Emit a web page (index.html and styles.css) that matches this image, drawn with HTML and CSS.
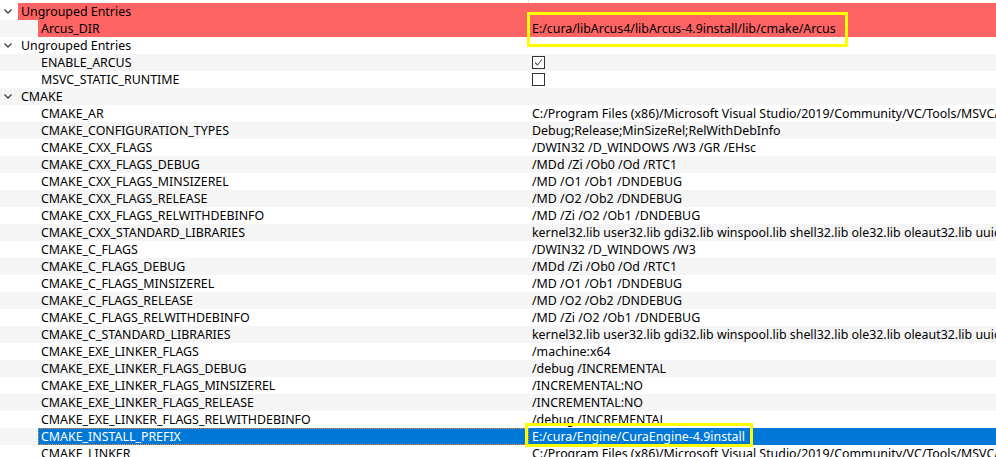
FILE: index.html
```html
<!DOCTYPE html>
<html>
<head>
<meta charset="utf-8">
<link rel="stylesheet" href="styles.css">
</head>
<body>
<div class="tree">
  <div class="topstrip"><div class="topname"></div><div class="topvalue"></div></div>

  <div class="row group">
    <div class="toggle"><svg width="8" height="5" viewBox="0 0 8 5"><polyline points="0.5,0.5 4,4 7.5,0.5" fill="none" stroke="#404040" stroke-width="1.3"/></svg></div>
    <div class="cells new"><div class="name">Ungrouped Entries</div><div class="value"></div></div>
  </div>
  <div class="row item alt">
    <div class="toggle"></div><div class="indent"></div>
    <div class="cells new"><div class="name">Arcus_DIR</div><div class="value">E:/cura/libArcus4/libArcus-4.9install/lib/cmake/Arcus</div></div>
  </div>

  <div class="row group">
    <div class="toggle"><svg width="8" height="5" viewBox="0 0 8 5"><polyline points="0.5,0.5 4,4 7.5,0.5" fill="none" stroke="#404040" stroke-width="1.3"/></svg></div>
    <div class="cells"><div class="name">Ungrouped Entries</div><div class="value"></div></div>
  </div>
  <div class="row item alt">
    <div class="toggle"></div><div class="indent"></div>
    <div class="cells"><div class="name">ENABLE_ARCUS</div><div class="value"><span class="check on"><svg width="11" height="11" viewBox="0 0 11 11"><polyline points="2,5.5 4.5,8 9,2.5" fill="none" stroke="#555" stroke-width="1.1"/></svg></span></div></div>
  </div>
  <div class="row item">
    <div class="toggle"></div><div class="indent"></div>
    <div class="cells"><div class="name">MSVC_STATIC_RUNTIME</div><div class="value"><span class="check"></span></div></div>
  </div>

  <div class="row group alt">
    <div class="toggle"><svg width="8" height="5" viewBox="0 0 8 5"><polyline points="0.5,0.5 4,4 7.5,0.5" fill="none" stroke="#404040" stroke-width="1.3"/></svg></div>
    <div class="cells"><div class="name">CMAKE</div><div class="value"></div></div>
  </div>
  <div class="row item"><div class="toggle"></div><div class="indent"></div><div class="cells"><div class="name">CMAKE_AR</div><div class="value">C:/Program Files (x86)/Microsoft Visual Studio/2019/Community/VC/Tools/MSVC/14.28.29333/bin/Hostx64/x64/lib.exe</div></div></div>
  <div class="row item alt"><div class="toggle"></div><div class="indent"></div><div class="cells"><div class="name">CMAKE_CONFIGURATION_TYPES</div><div class="value">Debug;Release;MinSizeRel;RelWithDebInfo</div></div></div>
  <div class="row item"><div class="toggle"></div><div class="indent"></div><div class="cells"><div class="name">CMAKE_CXX_FLAGS</div><div class="value">/DWIN32 /D_WINDOWS /W3 /GR /EHsc</div></div></div>
  <div class="row item alt"><div class="toggle"></div><div class="indent"></div><div class="cells"><div class="name">CMAKE_CXX_FLAGS_DEBUG</div><div class="value">/MDd /Zi /Ob0 /Od /RTC1</div></div></div>
  <div class="row item"><div class="toggle"></div><div class="indent"></div><div class="cells"><div class="name">CMAKE_CXX_FLAGS_MINSIZEREL</div><div class="value">/MD /O1 /Ob1 /DNDEBUG</div></div></div>
  <div class="row item alt"><div class="toggle"></div><div class="indent"></div><div class="cells"><div class="name">CMAKE_CXX_FLAGS_RELEASE</div><div class="value">/MD /O2 /Ob2 /DNDEBUG</div></div></div>
  <div class="row item"><div class="toggle"></div><div class="indent"></div><div class="cells"><div class="name">CMAKE_CXX_FLAGS_RELWITHDEBINFO</div><div class="value">/MD /Zi /O2 /Ob1 /DNDEBUG</div></div></div>
  <div class="row item alt"><div class="toggle"></div><div class="indent"></div><div class="cells"><div class="name">CMAKE_CXX_STANDARD_LIBRARIES</div><div class="value">kernel32.lib user32.lib gdi32.lib winspool.lib shell32.lib ole32.lib oleaut32.lib uuid.lib comdlg32.lib advapi32.lib</div></div></div>
  <div class="row item"><div class="toggle"></div><div class="indent"></div><div class="cells"><div class="name">CMAKE_C_FLAGS</div><div class="value">/DWIN32 /D_WINDOWS /W3</div></div></div>
  <div class="row item alt"><div class="toggle"></div><div class="indent"></div><div class="cells"><div class="name">CMAKE_C_FLAGS_DEBUG</div><div class="value">/MDd /Zi /Ob0 /Od /RTC1</div></div></div>
  <div class="row item"><div class="toggle"></div><div class="indent"></div><div class="cells"><div class="name">CMAKE_C_FLAGS_MINSIZEREL</div><div class="value">/MD /O1 /Ob1 /DNDEBUG</div></div></div>
  <div class="row item alt"><div class="toggle"></div><div class="indent"></div><div class="cells"><div class="name">CMAKE_C_FLAGS_RELEASE</div><div class="value">/MD /O2 /Ob2 /DNDEBUG</div></div></div>
  <div class="row item"><div class="toggle"></div><div class="indent"></div><div class="cells"><div class="name">CMAKE_C_FLAGS_RELWITHDEBINFO</div><div class="value">/MD /Zi /O2 /Ob1 /DNDEBUG</div></div></div>
  <div class="row item alt"><div class="toggle"></div><div class="indent"></div><div class="cells"><div class="name">CMAKE_C_STANDARD_LIBRARIES</div><div class="value">kernel32.lib user32.lib gdi32.lib winspool.lib shell32.lib ole32.lib oleaut32.lib uuid.lib comdlg32.lib advapi32.lib</div></div></div>
  <div class="row item"><div class="toggle"></div><div class="indent"></div><div class="cells"><div class="name">CMAKE_EXE_LINKER_FLAGS</div><div class="value">/machine:x64</div></div></div>
  <div class="row item alt"><div class="toggle"></div><div class="indent"></div><div class="cells"><div class="name">CMAKE_EXE_LINKER_FLAGS_DEBUG</div><div class="value">/debug /INCREMENTAL</div></div></div>
  <div class="row item"><div class="toggle"></div><div class="indent"></div><div class="cells"><div class="name">CMAKE_EXE_LINKER_FLAGS_MINSIZEREL</div><div class="value">/INCREMENTAL:NO</div></div></div>
  <div class="row item alt"><div class="toggle"></div><div class="indent"></div><div class="cells"><div class="name">CMAKE_EXE_LINKER_FLAGS_RELEASE</div><div class="value">/INCREMENTAL:NO</div></div></div>
  <div class="row item"><div class="toggle"></div><div class="indent"></div><div class="cells"><div class="name">CMAKE_EXE_LINKER_FLAGS_RELWITHDEBINFO</div><div class="value">/debug /INCREMENTAL</div></div></div>
  <div class="row item alt"><div class="toggle"></div><div class="indent"></div><div class="cells selected"><div class="name focus">CMAKE_INSTALL_PREFIX</div><div class="value">E:/cura/Engine/CuraEngine-4.9install</div></div></div>
  <div class="row item"><div class="toggle"></div><div class="indent"></div><div class="cells"><div class="name">CMAKE_LINKER</div><div class="value">C:/Program Files (x86)/Microsoft Visual Studio/2019/Community/VC/Tools/MSVC/14.28.29333/bin/Hostx64/x64/link.exe</div></div></div>

  <div class="mark mark-top"></div>
  <div class="mark mark-bottom"></div>
</div>
</body>
</html>
```

FILE: styles.css
```css
html, body {
  margin: 0;
  padding: 0;
  background: #ffffff;
  overflow: hidden;
}
body {
  font-family: "Noto Sans", "Open Sans", sans-serif;
  font-size: 12.4px;
  color: #000;
}
.tree {
  position: relative;
  width: 996px;
  height: 457px;
  overflow: hidden;
}
.topstrip {
  display: flex;
  height: 3px;
}
.topname {
  width: 528px;
  border-right: 1px solid #e3e3e3;
}
.row {
  display: flex;
  height: 17px;
  line-height: 17px;
  white-space: nowrap;
}
.row.alt {
  background: #f5f5f5;
}
.toggle {
  flex: none;
  width: 18px;
  display: flex;
  align-items: center;
  justify-content: flex-start;
  padding-left: 4px;
  box-sizing: border-box;
}
.toggle svg {
  display: block;
  margin-top: -1px;
}
.indent {
  flex: none;
  width: 20px;
}
.cells {
  flex: 1;
  display: flex;
  min-width: 0;
}
.cells.new {
  background: #ff6464;
}
.cells.selected {
  background: #0078d7;
  color: #fff;
}
.name {
  flex: none;
  box-sizing: border-box;
  padding-left: 3px;
  overflow: hidden;
}
.group .name {
  width: 511px;
}
.item .name {
  width: 491px;
}
.name.focus {
  border: 1px dotted #ff8728;
  padding-left: 2px;
  line-height: 15px;
}
.value {
  flex: 1;
  min-width: 0;
  padding-left: 3px;
  overflow: hidden;
  display: flex;
  align-items: center;
}
.check {
  display: block;
  width: 13px;
  height: 13px;
  box-sizing: border-box;
  border: 1px solid #333;
  background: #fff;
}
.check svg {
  display: block;
}
.mark {
  position: absolute;
  border: 3px solid #ffff00;
  box-sizing: border-box;
  pointer-events: none;
}
.mark-top {
  left: 527px;
  top: 12px;
  width: 321px;
  height: 35px;
}
.mark-bottom {
  left: 525px;
  top: 423px;
  width: 228px;
  height: 24px;
}
```
